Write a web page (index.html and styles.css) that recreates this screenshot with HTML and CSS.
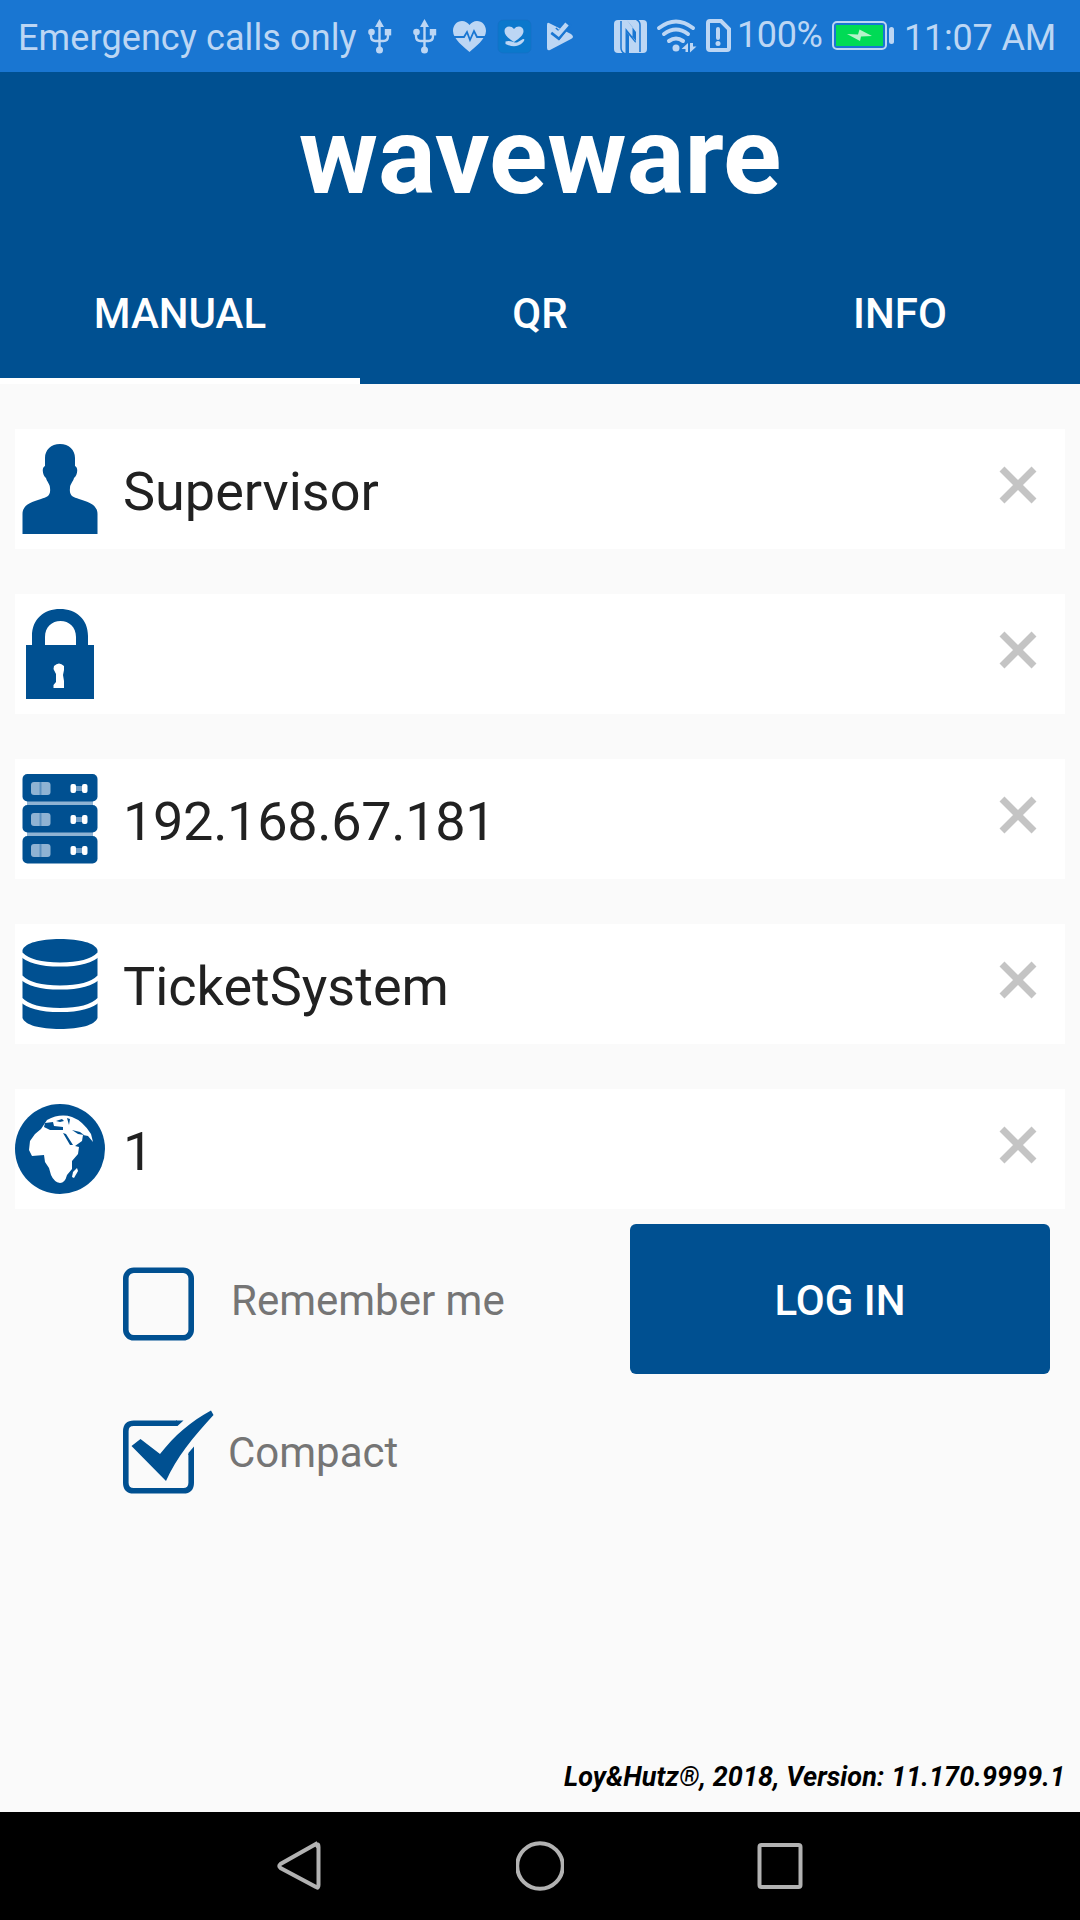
FILE: index.html
```html
<!DOCTYPE html>
<html lang="en">
<head>
  <meta charset="UTF-8" />
  <title>waveware</title>
  <link rel="stylesheet" href="styles.css">
</head>
<body>
  <div class="statusbar">
    <span class="carrier">Emergency calls only</span>
    <svg class="notifications" width="220" height="72" viewBox="360 0 220 72">
      <defs>
        <g id="usb">
          <path d="M11 4V30M2.500 13V17Q2.500 22 7 22H15Q19.500 22 19.500 17V13" fill="none" stroke="#bcd6f4" stroke-width="2.400"/>
          <path d="M11 0L15.500 8H6.500Z"/>
          <circle cx="3" cy="13" r="3.300"/>
          <rect x="16.300" y="10" width="6.400" height="6.400"/>
          <circle cx="11" cy="31" r="3.500"/>
        </g>
      </defs>
      <g fill="#bcd6f4">
        <use href="#usb" x="368.500" y="19"/>
        <use href="#usb" x="413.500" y="19"/>
        <path d="M469.500 52C464 47 453 39 453 31C453 25 457 21 462 21C465 21 468 23 469.500 25C471 23 474 21 477 21C482 21 486 25 486 31C486 39 475 47 469.500 52Z"/>
        <path d="M453 37H464L467 32L470 40L474 31L477 37H486" fill="none" stroke="#1976d2" stroke-width="1.800"/>
        <rect x="498" y="20" width="33" height="33" rx="5" fill="#0b78cc"/>
        <rect x="498" y="20" width="33" height="33" rx="5" fill="none" stroke="#156bc0" stroke-opacity=".5"/>
        <path d="M514 42C508 38 504.500 35 504.500 31C504.500 26 511 25 514 29C517 25 523.500 26 523.500 31C523.500 35 520 38 514 42Z"/>
        <path d="M505.500 41.500C510 39.500 514 43 517 42.500L523 39C526 38.500 524 43.500 518 45.500Q513 47.500 505.500 44Z"/>
        <path d="M549 23L571 34Q575 37 571 39L550 50Q547 51 547 48V25Q547 22 549 23Z"/>
        <path d="M554 30L559 35L569 23" fill="none" stroke="#1976d2" stroke-width="7"/>
        <path d="M552 32L558.500 37L568 25" fill="none" stroke="#1976d2" stroke-width="5"/>
        <path d="M551 28L558.500 34L567 24" fill="none" stroke="#bcd6f4" stroke-width="4.500"/>
      </g>
    </svg>
    <svg class="signals" width="125" height="72" viewBox="610 0 125 72">
      <rect x="614" y="20" width="33" height="33" rx="4" fill="#bcd6f4"/>
      <path d="M621 21V48Q621 51.500 624.500 53.500M640 52V25Q640 21.500 636.500 19.500" fill="none" stroke="#1976d2" stroke-width="1.500"/>
      <path d="M625.500 31L635.500 43V40.500L625.500 28ZM625.500 31L629 35.500V53H625.500ZM626.500 19.500L636 32V42L632.500 37V27Z" fill="#1976d2"/>
      <g fill="none" stroke="#bcd6f4" stroke-width="4" stroke-linecap="round">
        <path d="M659 28Q676 15 693 28"/>
        <path d="M664 34Q676 25 688 34"/>
        <path d="M669 41Q676 36 683 41"/>
      </g>
      <circle cx="676" cy="48" r="3.500" fill="#bcd6f4"/>
      <path d="M688 43V52H685.500V49H681.500ZM690 43H693V46.500H696.500L690 52.500Z" fill="#bcd6f4"/>
      <path d="M710 21H721L729 29V48Q729 50 727 50H710Q708 50 708 48V23Q708 21 710 21Z" fill="none" stroke="#bcd6f4" stroke-width="4"/>
      <path d="M718 29V38" stroke="#bcd6f4" stroke-width="4" stroke-linecap="round"/>
      <circle cx="718" cy="43.500" r="2.500" fill="#bcd6f4"/>
    </svg>
    <span class="percent">100%</span>
    <svg class="battery" width="64" height="72" viewBox="832 0 64 72">
      <rect x="833" y="22" width="53" height="27" rx="4" fill="none" stroke="#bcd6f4" stroke-width="2"/>
      <rect x="836" y="25" width="47" height="21" fill="#00db55"/>
      <path d="M847 34L858 34.500L859.500 29.500L872 36L861 36.500L860 41Z" fill="#b6f3ca"/>
      <rect x="889" y="27" width="5" height="17" rx="2.500" fill="#bcd6f4"/>
    </svg>
    <span class="clock">11:07 AM</span>
  </div>

  <header>
    <h1>waveware</h1>
    <nav class="tabs">
      <div class="tab active">MANUAL</div>
      <div class="tab">QR</div>
      <div class="tab">INFO</div>
    </nav>
  </header>

  <main>
    <div class="field">
      <svg class="icon" viewBox="0 0 90 90">
        <path d="M45 0C54 0 60 6 60 14V22C64 24 62 32 59 34C58 38 55 40 55 44C54 52 58 53 64 55C74 58 82.500 61 82.500 70V90H7.500V70C7.500 61 16 58 26 55C32 53 36 52 35 44C35 40 32 38 31 34C28 32 26 24 30 22V14C30 6 36 0 45 0Z"/>
      </svg>
      <div class="value">Supervisor</div>
      <svg class="clear" viewBox="0 0 38 38"><path d="M3 3L35 35M35 3L3 35"/></svg>
    </div>
    <div class="field">
      <svg class="icon" viewBox="0 0 90 90">
        <path d="M11 36H17V27C17 10 29 0 45 0C61 0 73 10 73 27V36H79V90H11ZM30 36H61V28C61 18 54 12 45.500 12C37 12 30 18 30 28Z" fill-rule="evenodd"/>
        <path class="hole" d="M39 57Q44 52 49 57V61L48 66L49 72V79H38.500V76L41 73V65L38.500 60Z"/>
      </svg>
      <div class="value"></div>
      <svg class="clear" viewBox="0 0 38 38"><path d="M3 3L35 35M35 3L3 35"/></svg>
    </div>
    <div class="field">
      <svg class="icon" viewBox="0 0 90 90">
        <rect x="12" y="20" width="66" height="50" fill="#8fb3d3"/>
        <g id="unit">
          <rect x="7.500" y="0" width="75" height="27.500" rx="5"/>
          <rect x="16" y="8" width="19.500" height="13" rx="3" fill="#8fb3d3"/>
          <path d="M25.500 8V21" stroke="#5b90bf" stroke-width="2"/>
          <path d="M57 14.500H71" stroke="#6c9bc5" stroke-width="5"/>
          <rect class="hole" x="55.500" y="10" width="5.500" height="9" rx="2"/>
          <rect class="hole" x="67" y="10" width="5.500" height="9" rx="2"/>
        </g>
        <use href="#unit" y="31"/>
        <use href="#unit" y="62"/>
      </svg>
      <div class="value address">192.168.67.181</div>
      <svg class="clear" viewBox="0 0 38 38"><path d="M3 3L35 35M35 3L3 35"/></svg>
    </div>
    <div class="field">
      <svg class="icon" viewBox="0 0 90 90">
        <path d="M7.500 11C10 4 25 0 45 0S80 4 82.500 11V79C80 86 65 90 45 90S10 86 7.500 79Z"/>
        <path class="rings" d="M6 15Q16 25.500 45 25.500T84 15M6 38Q16 48.500 45 48.500T84 38M6 60.500Q16 71 45 71T84 60.500"/>
      </svg>
      <div class="value">TicketSystem</div>
      <svg class="clear" viewBox="0 0 38 38"><path d="M3 3L35 35M35 3L3 35"/></svg>
    </div>
    <div class="field">
      <svg class="icon" viewBox="0 0 90 90">
        <circle cx="45" cy="45" r="45"/>
        <path class="hole" d="M26 25L32 16Q45 9 57 13Q68 17 76 30L78 38L73 32L68 31L67 37L60 42L64 43L63 50L57 57V65L52 71Q50 79 45 79Q39 78 36 71L34 64L30 58L29 51L17 52L14 46L15 37L20 30Z"/>
        <path d="M30 19L38 18L39 22L48 23L48 26L35 26L29 23ZM48 29L51 30L58 41L55 41ZM57 26L65 28L69 31L63 30ZM41 17L47 15L49 17L45 18ZM52 14L55 15L54 21Z"/>
        <path class="hole" d="M62 64L63 67L59 74L57 73L58 68Z"/>
      </svg>
      <div class="value">1</div>
      <svg class="clear" viewBox="0 0 38 38"><path d="M3 3L35 35M35 3L3 35"/></svg>
    </div>

    <div class="actions">
      <div class="options">
        <label class="option remember">
          <svg class="check" viewBox="0 0 92 92">
            <rect x="2.800" y="13.300" width="65.400" height="67.500" rx="8"/>
          </svg>
          <span>Remember me</span>
        </label>
        <label class="option compact">
          <svg class="check" viewBox="0 0 92 92">
            <path d="M54 13.300H10.800Q2.800 13.300 2.800 21.300V72.800Q2.800 80.800 10.800 80.800H60.200Q68.200 80.800 68.200 72.800V44"/>
            <path class="mark" d="M53 10.500H60.500L54.500 16.100H53ZM65.400 45V43L71 36.500V45Z"/>
            <path class="mark" d="M8.500 36L17.500 29L37 44C51 26 68 11 88 0.500L90.500 5C71 26 53 48 43 71Z"/>
          </svg>
          <span>Compact</span>
        </label>
      </div>
      <button class="login">LOG IN</button>
    </div>

    <footer>Loy&amp;Hutz®, 2018, Version: 11.170.9999.1</footer>
  </main>

  <div class="navbar">
    <svg viewBox="0 0 48 54"><path d="M42 6.500Q43.500 4 43.500 8V46Q43.500 50 41 48L5.500 29Q3 27 5.500 25L41 5Z" transform="translate(-1 0)"/></svg>
    <svg viewBox="0 0 48 54"><circle cx="24" cy="27" r="22.800"/></svg>
    <svg viewBox="0 0 48 54"><rect x="3.500" y="6" width="41" height="42" rx="2"/></svg>
  </div>
</body>
</html>
```
FILE: styles.css
```css
* {
  box-sizing: border-box;
}
body {
  margin: 0;
  width: 1080px;
  height: 1920px;
  display: flex;
  flex-direction: column;
  font-family: Roboto, sans-serif;
  background: #fafafa;
  overflow: hidden;
}
svg {
  display: block;
  flex-shrink: 0;
}
.statusbar {
  height: 72px;
  display: flex;
  background: #1976d2;
  color: #bcd6f4;
  font-size: 36px;
  line-height: 42px;
  white-space: nowrap;
}
.carrier {
  width: 360px;
  padding: 17px 0 0 18px;
  letter-spacing: 0.1px;
}
.signals {
  margin-left: 30px;
}
.percent {
  width: 97px;
  padding: 14px 0 0 2px;
  letter-spacing: -0.4px;
}
.clock {
  padding: 17px 0 0 8px;
  letter-spacing: -0.2px;
}
header {
  height: 312px;
  display: flex;
  flex-direction: column;
  justify-content: space-between;
  background: #005091;
  color: white;
}
h1 {
  margin: 21px 0 0;
  font-size: 108px;
  font-weight: 700;
  line-height: 127px;
  text-align: center;
}
.tabs {
  display: flex;
  height: 144px;
}
.tab {
  flex: 1;
  padding-top: 49px;
  border-bottom: 6px solid transparent;
  font-size: 42px;
  font-weight: 500;
  line-height: 50px;
  text-align: center;
}
.tab.active {
  border-color: white;
}
main {
  flex: 1;
  display: flex;
  flex-direction: column;
  padding: 45px 15px 0;
}
.field {
  height: 120px;
  display: flex;
  align-items: flex-start;
  margin-bottom: 45px;
  padding: 15px 28px 0 0;
  background: white;
}
.icon {
  width: 90px;
  height: 90px;
  fill: #005091;
}
.hole {
  fill: white;
}
.rings {
  fill: none;
  stroke: white;
  stroke-width: 4;
}
.value {
  flex: 1;
  padding: 16px 0 0 18px;
  font-size: 54px;
  line-height: 64px;
  color: #212121;
}
.address {
  letter-spacing: -0.3px;
}
.clear {
  width: 38px;
  height: 38px;
  margin-top: 22px;
  stroke: #c4c4c4;
  stroke-width: 7;
}
.actions {
  display: flex;
  justify-content: space-between;
  margin-top: -30px;
  padding: 0 15px 0 108px;
}
.options {
  padding-top: 33px;
}
.option {
  display: flex;
  height: 153px;
  font-size: 42px;
  line-height: 50px;
  color: #757575;
}
.option span {
  padding-top: 19px;
}
.remember span {
  margin-left: 16px;
}
.compact span {
  margin-left: 13px;
  padding-top: 18px;
}
.check {
  width: 92px;
  height: 92px;
  fill: none;
  stroke: #005091;
  stroke-width: 5.6;
}
.check .mark {
  fill: #005091;
  stroke: none;
}
.login {
  width: 420px;
  height: 150px;
  padding: 2px 0 0;
  border: none;
  border-radius: 6px;
  background: #005091;
  color: white;
  font-family: inherit;
  font-size: 42px;
  font-weight: 500;
}
footer {
  margin-top: auto;
  padding-bottom: 18px;
  font-size: 27px;
  font-style: italic;
  font-weight: 700;
  line-height: 34px;
  letter-spacing: 0.06px;
  text-align: right;
  color: black;
}
.navbar {
  height: 108px;
  display: flex;
  justify-content: center;
  align-items: center;
  gap: 192px;
  background: black;
}
.navbar svg {
  width: 48px;
  height: 54px;
  fill: none;
  stroke: #b2b2b2;
  stroke-width: 4;
}
```
